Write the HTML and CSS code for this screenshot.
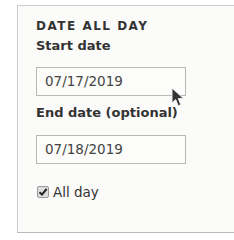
FILE: index.html
```html
<!DOCTYPE html>
<html>
<head>
<meta charset="utf-8">
<link rel="stylesheet" href="styles.css">
</head>
<body>
<div class="panel">
  <div class="title">DATE ALL DAY</div>
  <label class="label">Start date</label>
  <div class="input first">07/17/2019</div>
  <label class="label end">End date (optional)</label>
  <div class="input second">07/18/2019</div>
  <div class="check">
    <span class="box"><svg width="10" height="10" viewBox="0 0 10 10"><path d="M1.5 5.2 L4 7.6 L8.6 2" fill="none" stroke="#222" stroke-width="2"/></svg></span>
    <span>All day</span>
  </div>
</div>
<svg class="cursor" width="15" height="21" viewBox="0 0 15 21"><path d="M1 1 L1 16 L4.7 12.6 L7.2 18.8 L9.8 17.7 L7.3 11.6 L12.5 11.6 Z" fill="#333" stroke="#eee" stroke-width="1"/></svg>
</body>
</html>
```
FILE: styles.css
```css
html, body { margin: 0; padding: 0; background: #fff; }
body { font-family: "DejaVu Sans", sans-serif; color: #333; width: 234px; height: 240px; overflow: hidden; position: relative; }
.panel {
  margin: 5px 0 0 17px;
  width: 220px;
  height: 228px;
  border: 1px solid #ccc;
  border-right: none;
  border-bottom-color: #b8b8b8;
  background: #fbfbf9;
  padding: 12px 0 0 18px;
  box-sizing: border-box;
  display: flex;
  flex-direction: column;
  align-items: flex-start;
}
.title { font-weight: bold; font-size: 12px; letter-spacing: 0.125em; line-height: 16px; }
.label { font-weight: bold; font-size: 13px; line-height: 18px; margin-top: 3px; }
.label.end { margin-top: 8px; }
.input {
  width: 150px; height: 29px; box-sizing: border-box;
  border: 1px solid #b8b8b8; background: #fcfcfa;
  padding: 0 8px; font-size: 13.5px; line-height: 27px; color: #444;
}
.input.first { margin-top: 12px; }
.input.second { margin-top: 13px; }
.check { margin-top: 19px; margin-left: 1px; height: 18px; display: flex; align-items: center; gap: 4px; font-size: 13.5px; }
.box { width: 10px; height: 10px; border: 1px solid #999; border-radius: 2px; background: #ddd; display: flex; align-items: center; justify-content: center; }
.cursor { position: absolute; left: 171px; top: 87px; }
```
